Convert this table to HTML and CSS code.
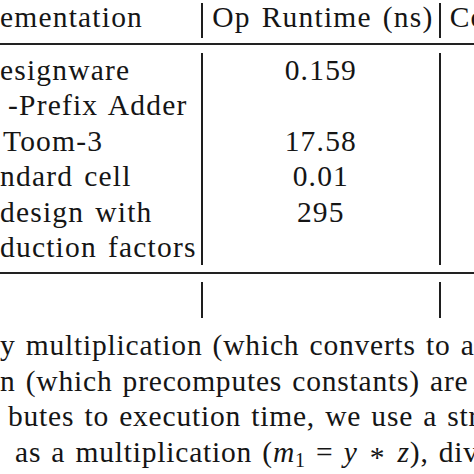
FILE: index.html
```html
<!DOCTYPE html>
<html lang="en">
<head>
  <meta charset="UTF-8" />
  <title>Runtime table</title>
  <link rel="stylesheet" href="styles.css">
</head>
<body>

  <div class="page">
    <!-- Table -->
    <div class="row head">
      <div class="cell c1">ementation</div>
      <div class="sep"></div>
      <div class="cell c2">Op Runtime (ns)</div>
      <div class="sep"></div>
      <div class="cell c3">Co</div>
    </div>
    <div class="rule"></div>
    <div class="row body">
      <div class="cell c1">
        <div>esignware</div>
        <div class="ind-prefix">-Prefix Adder</div>
        <div class="ind-toom">Toom-3</div>
        <div>ndard cell</div>
        <div>design with</div>
        <div>duction factors</div>
      </div>
      <div class="sep"></div>
      <div class="cell c2">
        <div>0.159</div>
        <div>&nbsp;</div>
        <div>17.58</div>
        <div>0.01</div>
        <div>295</div>
        <div>&nbsp;</div>
      </div>
      <div class="sep"></div>
      <div class="cell c3"></div>
    </div>
    <div class="rule second"></div>
    <div class="row empty">
      <div class="cell c1"></div>
      <div class="sep"></div>
      <div class="cell c2"></div>
      <div class="sep"></div>
      <div class="cell c3"></div>
    </div>

    <!-- Paragraph -->
    <div class="text">
      <div class="line">y multiplication (which converts to a</div>
      <div class="line">n (which precomputes constants) are</div>
      <div class="line l3">butes to execution time, we use a stra</div>
      <div class="line l4">as a multiplication (<i>m</i><sub>1</sub> = <i>y</i> <span class="op">*</span> <i>z</i>), div</div>
    </div>
  </div>

</body>
</html>
```

FILE: styles.css
```css
html, body {
  margin: 0;
  padding: 0;
  background: #fff;
  overflow: hidden;
}
.page {
  width: 474px;
  height: 474px;
  overflow: hidden;
  font-family: "Liberation Serif", "Times New Roman", serif;
  font-size: 29.5px;
  letter-spacing: 1.2px;
  word-spacing: 2.5px;
  color: #151515;
  line-height: 35.4px;
}
.row {
  display: flex;
}
.cell {
  white-space: nowrap;
}
.c1 {
  width: 201px;
  flex-shrink: 0;
}
.c2 {
  width: 236.5px;
  flex-shrink: 0;
  text-align: center;
}
.c3 {
  flex: 1;
  min-width: 0;
  overflow: hidden;
  padding-left: 9px;
}
.sep {
  width: 1.6px;
  background: #1e1e1e;
  flex-shrink: 0;
}
.head {
  height: 38px;
}
.head .sep {
  align-self: flex-start;
  margin-top: 3px;
  height: 35px;
}
.head .c2 {
  padding-left: 4px;
  width: 232.5px;
}
.rule {
  height: 2px;
  background: #222;
  margin: 5px 0 8px;
}
.rule.second {
  margin-top: 4px;
}
.body {
  padding-bottom: 2.6px;
}
.ind-prefix {
  padding-left: 8px;
}
.ind-toom {
  padding-left: 3px;
}
.empty {
  height: 36px;
}
.text {
  margin-top: 10px;
  line-height: 35.6px;
  white-space: nowrap;
  letter-spacing: 0.8px;
  word-spacing: 2px;
}
.l3 {
  padding-left: 8px;
}
.l4 {
  padding-left: 15px;
}
.op {
  display: inline-block;
  vertical-align: -5px;
  padding: 0 2px;
}
.text sub {
  font-size: 20px;
  line-height: 0;
  vertical-align: -5px;
}
```
